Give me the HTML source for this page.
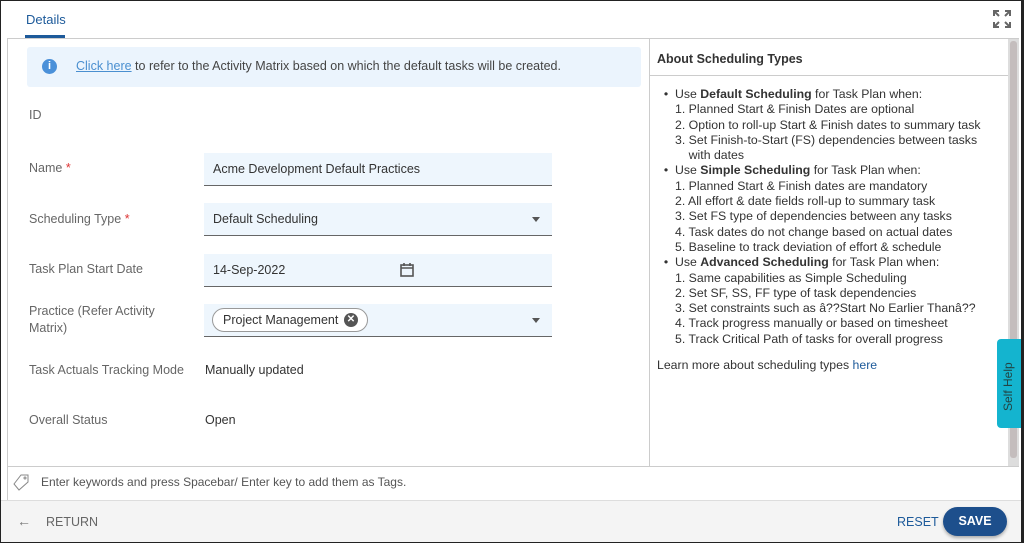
<!DOCTYPE html>
<html><head><meta charset="utf-8"><style>
*{box-sizing:border-box;margin:0;padding:0}
body{width:1024px;height:543px;overflow:hidden;font-family:"Liberation Sans",sans-serif;background:#fff;position:relative;color:#333}
.frame{position:absolute;inset:0;border:1px solid #222;border-right:3px solid #222}
.abs{position:absolute}
.lbl{position:absolute;left:29px;font-size:12.5px;color:#666}
.fld{position:absolute;left:204px;width:348px;height:33px;background:#eef6fd;border-bottom:1px solid #666;font-size:12.5px;color:#333;padding:9px 0 0 9px}
.caret{position:absolute;right:12px;top:14px;width:0;height:0;border-left:4px solid transparent;border-right:4px solid transparent;border-top:5px solid #555}
.req{color:#d33}
.val{position:absolute;left:205px;font-size:12.5px;color:#333}
.pn{position:absolute;left:657px;width:350px;font-size:12.3px;line-height:15.3px;color:#333}
</style></head><body>
<div class="abs" style="left:26px;top:12px;font-size:13px;color:#1d5a9a">Details</div>
<div class="abs" style="left:25px;top:35px;width:40px;height:3px;background:#1d5a9a"></div>
<div class="abs" style="left:7px;top:38px;width:1012px;height:1px;background:#ccc"></div>
<svg class="abs" style="left:992px;top:9px" width="20" height="20" viewBox="0 0 20 20" fill="none" stroke="#666" stroke-width="2"><path d="M2 7V2h5M2 2l5 5M18 7V2h-5M18 2l-5 5M2 13v5h5M2 18l5-5M18 13v5h-5M18 18l-5-5"/></svg>
<div class="abs" style="left:7px;top:39px;width:1px;height:461px;background:#ccc"></div>
<div class="abs" style="left:27px;top:47px;width:614px;height:40px;background:#ebf4fd;border-radius:3px"></div>
<div class="abs" style="left:42px;top:59px;width:15px;height:15px;border-radius:50%;background:#4a90d9;color:#fff;font-size:11px;font-weight:bold;text-align:center;line-height:15px">i</div>
<div class="abs" style="left:76px;top:59px;font-size:12.5px;color:#444"><span style="color:#4a8fd0;text-decoration:underline">Click here</span> to refer to the Activity Matrix based on which the default tasks will be created.</div>
<div class="lbl" style="top:108px">ID</div>
<div class="lbl" style="top:161px">Name <span class="req">*</span></div>
<div class="fld" style="top:153px">Acme Development Default Practices</div>
<div class="lbl" style="top:212px">Scheduling Type <span class="req">*</span></div>
<div class="fld" style="top:203px">Default Scheduling<span class="caret"></span></div>
<div class="lbl" style="top:262px">Task Plan Start Date</div>
<div class="fld" style="top:254px">14-Sep-2022
<svg class="abs" style="left:195px;top:8px" width="16" height="16" viewBox="0 0 16 16" fill="none" stroke="#555" stroke-width="1.6"><rect x="2" y="3" width="12" height="11"/><path d="M2 6h12M5 1v3M11 1v3"/></svg></div>
<div class="lbl" style="top:303px;line-height:17px">Practice (Refer Activity<br>Matrix)</div>
<div class="fld" style="top:304px;padding:4px 0 0 8px"><div style="position:relative;border:1px solid #999;border-radius:13px;background:#fff;height:24px;width:156px;white-space:nowrap"><span style="position:absolute;left:10px;top:4px">Project Management</span><span style="position:absolute;left:131px;top:4px;width:14px;height:14px;border-radius:50%;background:#555;color:#fff;font-size:10px;text-align:center;line-height:14px;font-weight:bold">✕</span></div><span class="caret"></span></div>
<div class="lbl" style="top:363px">Task Actuals Tracking Mode</div>
<div class="val" style="top:363px">Manually updated</div>
<div class="lbl" style="top:413px">Overall Status</div>
<div class="val" style="top:413px">Open</div>
<div class="abs" style="left:649px;top:39px;width:1px;height:427px;background:#ccc"></div>
<div class="abs" style="left:7px;top:466px;width:1012px;height:1px;background:#ccc"></div>
<div class="abs" style="left:1008px;top:39px;width:11px;height:427px;background:#ddd"><div style="margin:2px auto;width:7px;height:417px;background:#c4bdbd;border-radius:3px"></div></div>
<div class="abs" style="left:657px;top:52px;font-size:12.5px;font-weight:bold;color:#333">About Scheduling Types</div>
<div class="abs" style="left:650px;top:75px;width:358px;height:1px;background:#ccc"></div>
<div class="pn" style="top:87px">
<div>&nbsp;&nbsp;•&nbsp;&nbsp;Use <b>Default Scheduling</b> for Task Plan when:</div>
<div style="padding-left:18px">1. Planned Start &amp; Finish Dates are optional<br>2. Option to roll-up Start &amp; Finish dates to summary task<br>3. Set Finish-to-Start (FS) dependencies between tasks<br>&nbsp;&nbsp;&nbsp;&nbsp;with dates</div>
<div>&nbsp;&nbsp;•&nbsp;&nbsp;Use <b>Simple Scheduling</b> for Task Plan when:</div>
<div style="padding-left:18px">1. Planned Start &amp; Finish dates are mandatory<br>2. All effort &amp; date fields roll-up to summary task<br>3. Set FS type of dependencies between any tasks<br>4. Task dates do not change based on actual dates<br>5. Baseline to track deviation of effort &amp; schedule</div>
<div>&nbsp;&nbsp;•&nbsp;&nbsp;Use <b>Advanced Scheduling</b> for Task Plan when:</div>
<div style="padding-left:18px">1. Same capabilities as Simple Scheduling<br>2. Set SF, SS, FF type of task dependencies<br>3. Set constraints such as â??Start No Earlier Thanâ??<br>4. Track progress manually or based on timesheet<br>5. Track Critical Path of tasks for overall progress</div>
<div style="margin-top:11px">Learn more about scheduling types <span style="color:#1d5a9a">here</span></div>
</div>
<div class="abs" style="left:997px;top:339px;width:27px;height:89px;background:#14b4cf;border-radius:4px 0 0 4px"><div style="position:absolute;left:4px;top:72px;transform:rotate(-90deg);transform-origin:0 0;font-size:12px;color:#244;white-space:nowrap;width:60px">Self Help</div></div>
<svg class="abs" style="left:11px;top:473px" width="20" height="20" viewBox="0 0 20 20" fill="none" stroke="#888" stroke-width="1"><path d="M3 11l7-9h7v7l-9 8z"/><circle cx="14" cy="5" r="1"/></svg>
<div class="abs" style="left:41px;top:475px;font-size:12px;color:#555">Enter keywords and press Spacebar/ Enter key to add them as Tags.</div>
<div class="abs" style="left:1px;top:500px;width:1020px;height:43px;background:#f4f4f4;border-top:1px solid #ddd"></div>
<div class="abs" style="left:17px;top:513px;font-size:14px;color:#777">←</div>
<div class="abs" style="left:46px;top:515px;font-size:12.5px;color:#666">RETURN</div>
<div class="abs" style="left:897px;top:515px;font-size:12.5px;color:#1d5a9a">RESET</div>
<div class="abs" style="left:943px;top:507px;width:64px;height:29px;border-radius:15px;background:#1d4f8c;color:#fff;font-size:12.5px;font-weight:bold;text-align:center;line-height:29px;box-shadow:0 2px 3px rgba(0,0,0,.3)">SAVE</div>
<div class="frame"></div>
</body></html>
